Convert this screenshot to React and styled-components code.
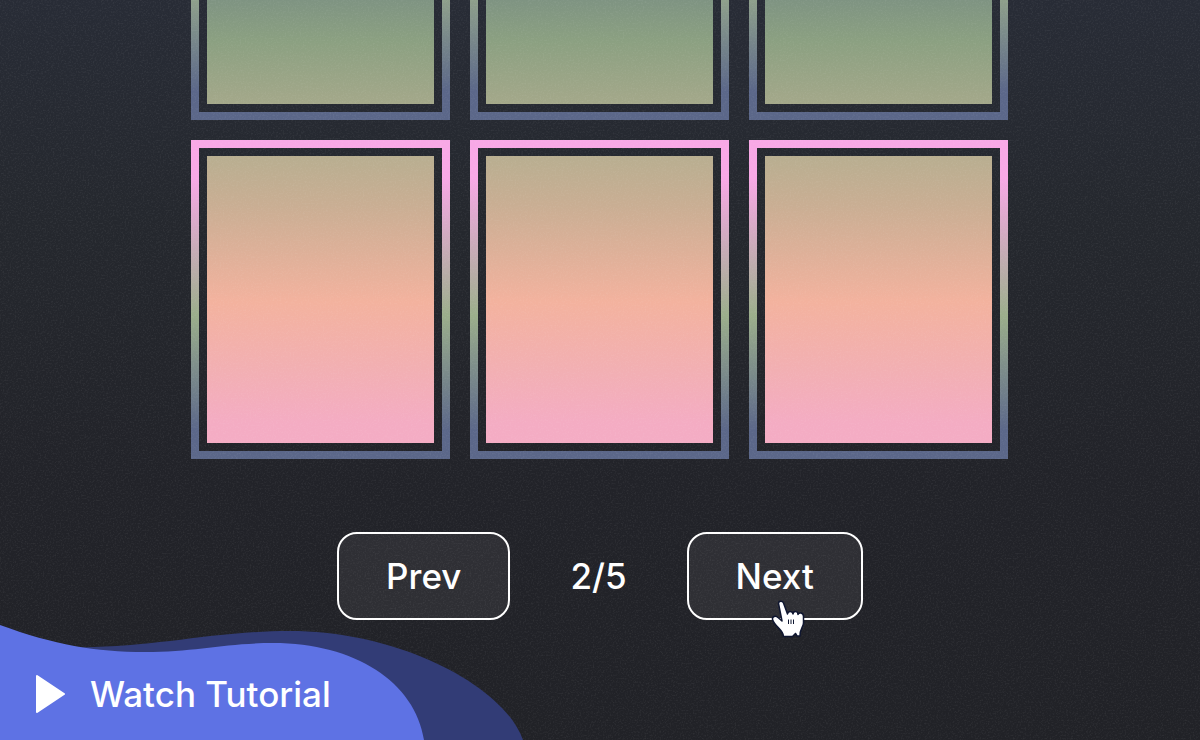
import React from "react";
import styled, { createGlobalStyle } from "styled-components";

const GlobalStyle = createGlobalStyle`
  *, *::before, *::after { box-sizing: border-box; }
  body {
    margin: 0;
    background: #232428;
    font-family: Inter, "Liberation Sans", sans-serif;
    -webkit-font-smoothing: antialiased;
  }
`;

const Page = styled.div`
  position: relative;
  min-height: 100vh;
  overflow: hidden;
  background: linear-gradient(180deg, #282c36 0%, #25282e 30%, #222329 65%, #212227 100%);
  color: #ffffff;
`;

const Grain = styled.svg`
  position: absolute;
  inset: 0;
  width: 100%;
  height: 100%;
  opacity: 0.05;
  pointer-events: none;
`;

const Gallery = styled.main`
  display: grid;
  grid-template-columns: repeat(3, 259px);
  grid-auto-rows: 319px;
  gap: 20px;
  justify-content: center;
  align-content: end;
  height: 459px;
  padding-right: 1px;
  overflow: hidden;
`;

const Card = styled.article`
  border: 8px solid;
  border-image: linear-gradient(180deg, #f8a8e6 0%, #f8a8e6 12%, #9bae8b 55%, #5b6789 91%, #5b6789 100%) 8;
  padding: 8px;
`;

const tones = {
  cool: "linear-gradient(180deg, #5b6789 0%, #7d9282 62%, #8ba081 78%, #a4a88a 100%)",
  warm: "linear-gradient(180deg, #b8ae90 0%, #c9ae93 17%, #f3b29e 51%, #f2afb3 75%, #f4acc3 93%, #f4acc4 100%)",
};

const Swatch = styled.div`
  height: 100%;
  background: ${({ $tone }) => tones[$tone]};
`;

const Pager = styled.nav`
  display: flex;
  align-items: center;
  justify-content: center;
  gap: 60px;
  margin-top: 73px;
  font-size: 35px;
  font-weight: 500;
  line-height: 44px;
`;

const PagerButton = styled.button`
  min-width: 172px;
  height: 88px;
  padding: 0 47px;
  border: 2px solid #ffffff;
  border-radius: 20px;
  background: rgba(255, 255, 255, 0.06);
  color: inherit;
  font: inherit;
  cursor: pointer;
`;

const Tutorial = styled.aside`
  position: absolute;
  left: 0;
  bottom: 0;
  width: 524px;
  height: 116px;
`;

const Wave = styled.svg`
  position: absolute;
  inset: 0;
`;

const TutorialLink = styled.a`
  position: relative;
  display: flex;
  align-items: center;
  gap: 24px;
  height: 100%;
  padding: 24px 0 0 36px;
  color: #ffffff;
  font-size: 35px;
  font-weight: 500;
  line-height: 44px;
  text-decoration: none;
`;

const Pointer = styled.svg`
  position: absolute;
  top: 599px;
  left: calc(50% + 169px);
  pointer-events: none;
`;

const cards = ["cool", "cool", "cool", "warm", "warm", "warm"];

export default function App() {
  return (
    <Page>
      <GlobalStyle />
      <Gallery>
        {cards.map((tone, i) => (
          <Card key={i}>
            <Swatch $tone={tone} />
          </Card>
        ))}
      </Gallery>
      <Pager aria-label="Pages">
        <PagerButton type="button">Prev</PagerButton>
        <span>2/5</span>
        <PagerButton type="button">Next</PagerButton>
      </Pager>
      <Grain aria-hidden="true">
        <filter id="grain">
          <feTurbulence type="fractalNoise" baseFrequency="0.6" numOctaves="2" />
          <feColorMatrix values="0 0 0 0 1  0 0 0 0 1  0 0 0 0 1  3 0 0 0 -1.4" />
        </filter>
        <rect width="100%" height="100%" filter="url(#grain)" />
      </Grain>
      <Tutorial>
        <Wave width="524" height="116" viewBox="0 0 524 116" aria-hidden="true">
          <path d="M70 23C150 25 210 7 290 7C400 7 504 62 523 116H70Z" fill="#323c76" />
          <path d="M0 1C55 21 95 28 145 28C195 28 225 19 273 19C355 19 415 58 424 116H0Z" fill="#5e72e4" />
        </Wave>
        <TutorialLink href="#tutorial">
          <svg width="30" height="38" viewBox="0 0 30 38" aria-hidden="true">
            <path d="M1 1L28 19L1 37Z" fill="#fff" stroke="#fff" strokeWidth="2" strokeLinejoin="round" />
          </svg>
          Watch Tutorial
        </TutorialLink>
      </Tutorial>
      <Pointer width="38" height="42" viewBox="0 0 38 42" aria-hidden="true">
        <path
          d="M9.5 4.5C9.5 1.5 13.5 1.5 14.5 4L18.5 15C19 11.500 23.500 11.500 24 15C24.500 11.500 29 12 29 15.500C30 13 34.500 13.500 34.500 17.500V24C34.500 28 30.500 30.500 31 37H28L26.500 34.500L23.500 37.500H14.500C14.500 31 6 28 3.500 20.500C3 17.500 6.500 16 9 18.500L13 22Z"
          fill="#fff"
          stroke="#0f1630"
          strokeWidth="1.5"
          strokeLinejoin="round"
        />
        <path d="M19.500 20.500V25M22 20.500V25M24.500 20.500V25" stroke="#0f1630" strokeWidth="1" />
      </Pointer>
    </Page>
  );
}
